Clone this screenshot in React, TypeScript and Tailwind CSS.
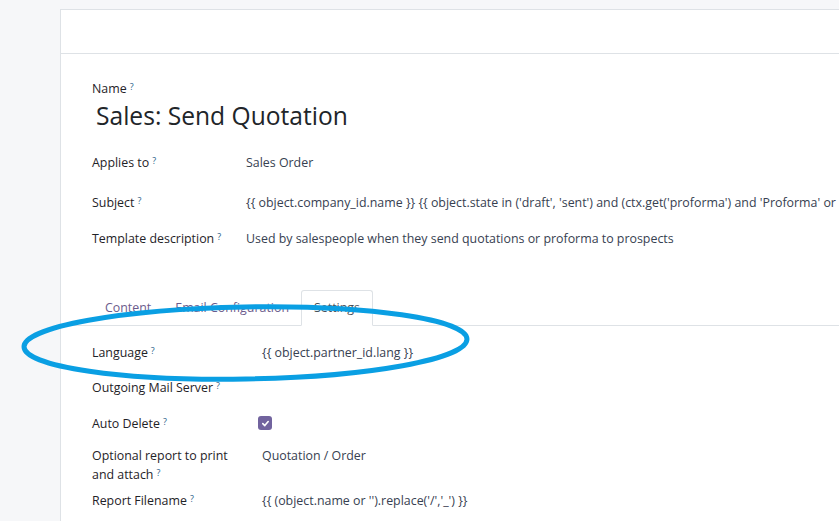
import React from "react";

const Q = () => <sup className="ml-[3px] text-[9px] font-normal text-[#2c5f8a] relative -top-[3px]">?</sup>;

const Row: React.FC<{ label: React.ReactNode; value?: React.ReactNode; h: string; vx: string }> = ({ label, value, h, vx }) => (
  <div className={`flex items-start ${h}`}>
    <div className={`${vx} shrink-0 text-[12.4px] font-medium text-[#1f2328] leading-[19px]`}>{label}</div>
    <div className="text-[12.4px] text-[#374151] leading-[19px] whitespace-nowrap">{value}</div>
  </div>
);

const App: React.FC = () => {
  return (
    <div className="relative w-[839px] h-[521px] overflow-hidden bg-[#f6f7f9] pt-[9px] pl-[60px]" style={{ fontFamily: "'Open Sans', 'Noto Sans', sans-serif" }}>
      <div className="h-[520px] overflow-hidden bg-white border-l border-t border-[#dee2e6]">
        <div className="h-[44px] border-b border-[#dee2e6]" />
        <div className="pl-[31px] pt-[26px]">
          <div className="text-[12.4px] font-medium text-[#1f2328] leading-[18px]">
            Name<Q />
          </div>
          <div className="ml-[4px] mt-[1px] text-[24.6px] text-[#212529] leading-[34px]">Sales: Send Quotation</div>
          <div className="mt-[20px]">
            <Row h="h-[40px]" vx="w-[154px]" label={<>Applies to<Q /></>} value="Sales Order" />
            <Row
              h="h-[36px]"
              vx="w-[154px]"
              label={<>Subject<Q /></>}
              value="{{ object.company_id.name }} {{ object.state in ('draft', 'sent') and (ctx.get('proforma') and 'Proforma' or 'Quotation') or 'Order' }}"
            />
            <Row
              h="h-[36px]"
              vx="w-[154px]"
              label={<>Template description<Q /></>}
              value="Used by salespeople when they send quotations or proforma to prospects"
            />
          </div>
        </div>
        <div className="mt-[25px] flex items-end border-b border-[#dee2e6] pl-[32px] text-[12.4px] leading-[18px]">
          <div className="px-[12px] py-[8px] text-[#6b5b8c]">Content</div>
          <div className="px-[12px] py-[8px] text-[#6b5b8c]">Email Configuration</div>
          <div className="-mb-px px-[12px] py-[8px] text-[#495057] bg-white border border-b-white border-[#dee2e6] rounded-t-[3px]">
            Settings
          </div>
        </div>
        <div className="pl-[31px] pt-[17px]">
          <Row h="h-[35px]" vx="w-[170px]" label={<>Language<Q /></>} value="{{ object.partner_id.lang }}" />
          <Row h="h-[36px]" vx="w-[170px]" label={<>Outgoing Mail Server<Q /></>} />
          <Row
            h="h-[32px]"
            vx="w-[166px]"
            label={<>Auto Delete<Q /></>}
            value={
              <span className="mt-[2px] flex h-[14px] w-[14px] items-center justify-center rounded-[3px] bg-[#71639e]">
                <svg width="9" height="9" viewBox="0 0 10 10">
                  <path d="M2 5.2 L4.2 7.3 L8 2.8" fill="none" stroke="white" strokeWidth="1.8" strokeLinecap="round" strokeLinejoin="round" />
                </svg>
              </span>
            }
          />
          <Row
            h="h-[45px]"
            vx="w-[170px]"
            label={
              <>
                Optional report to print
                <br />
                and attach<Q />
              </>
            }
            value="Quotation / Order"
          />
          <Row h="h-[30px]" vx="w-[170px]" label={<>Report Filename<Q /></>} value="{{ (object.name or '').replace('/','_') }}" />
        </div>
      </div>
      <svg className="pointer-events-none absolute left-0 top-0" width="839" height="521">
        <ellipse cx="245.5" cy="343" rx="221.5" ry="36" fill="none" stroke="#0a9fe3" strokeWidth="5" transform="rotate(-1 245 343)" />
      </svg>
    </div>
  );
};

export default App;
